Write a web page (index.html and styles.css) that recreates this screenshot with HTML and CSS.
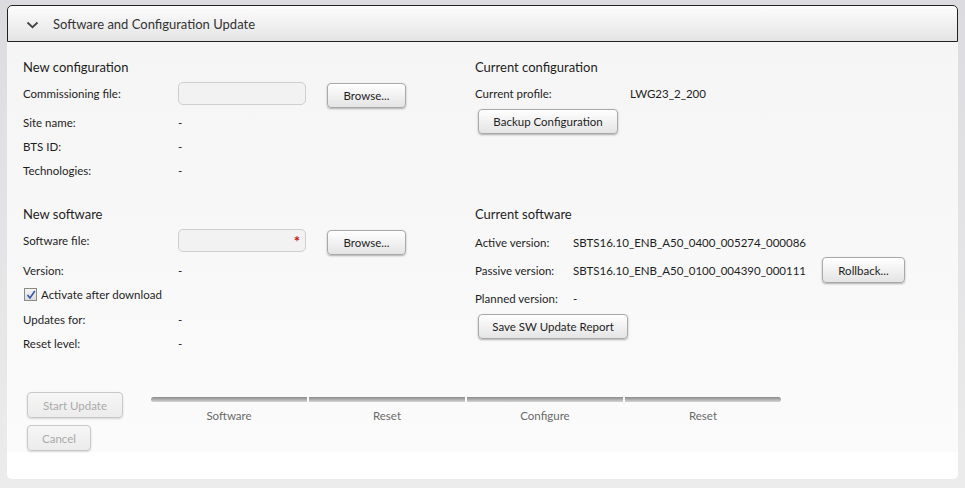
FILE: index.html
```html
<!DOCTYPE html>
<html>
<head>
<meta charset="utf-8">
<link rel="stylesheet" href="styles.css">
</head>
<body>
<div class="panel">
  <div class="panel-header">
    <svg class="chevron" width="13" height="8" viewBox="0 0 13 8"><path d="M1.5 1.5 L6.5 6.2 L11.5 1.5" fill="none" stroke="#444" stroke-width="1.8"/></svg>
    <span class="panel-title">Software and Configuration Update</span>
  </div>
  <div class="panel-body">
    <div class="content">
      <div class="columns">
        <div class="col col-left">
          <div class="section section-cfg">
            <h2 class="section-title">New configuration</h2>
            <div class="row file-row">
              <span class="label">Commissioning file:</span>
              <span class="file-input"></span>
              <button class="btn browse">Browse...</button>
            </div>
            <div class="row"><span class="label">Site name:</span><span class="value">-</span></div>
            <div class="row"><span class="label">BTS ID:</span><span class="value">-</span></div>
            <div class="row"><span class="label">Technologies:</span><span class="value">-</span></div>
          </div>
          <div class="section section-sw">
            <h2 class="section-title">New software</h2>
            <div class="row file-row">
              <span class="label">Software file:</span>
              <span class="file-input"><span class="required">*</span></span>
              <button class="btn browse">Browse...</button>
            </div>
            <div class="row"><span class="label">Version:</span><span class="value">-</span></div>
            <div class="row check-row">
              <span class="checkbox"><svg width="10" height="10" viewBox="0 0 10 10"><path d="M1.5 5 L4 8 L8.8 1" fill="none" stroke="#3a55a8" stroke-width="1.6"/></svg></span>
              <span class="check-label">Activate after download</span>
            </div>
            <div class="row"><span class="label">Updates for:</span><span class="value">-</span></div>
            <div class="row"><span class="label">Reset level:</span><span class="value">-</span></div>
          </div>
        </div>
        <div class="col col-right">
          <div class="section section-cfg">
            <h2 class="section-title">Current configuration</h2>
            <div class="row file-row">
              <span class="label">Current profile:</span>
              <span class="value">LWG23_2_200</span>
            </div>
            <button class="btn backup">Backup Configuration</button>
          </div>
          <div class="section section-sw">
            <h2 class="section-title">Current software</h2>
            <div class="row sw-row"><span class="label label-sw">Active version:</span><span class="value">SBTS16.10_ENB_A50_0400_005274_000086</span></div>
            <div class="row sw-row"><span class="label label-sw">Passive version:</span><span class="value value-passive">SBTS16.10_ENB_A50_0100_004390_000111</span><button class="btn rollback">Rollback...</button></div>
            <div class="row sw-row"><span class="label label-sw">Planned version:</span><span class="value">-</span></div>
            <button class="btn report">Save SW Update Report</button>
          </div>
        </div>
      </div>
      <div class="actions">
        <div class="action-buttons">
          <button class="btn disabled start">Start Update</button>
          <button class="btn disabled cancel">Cancel</button>
        </div>
        <div class="progress">
          <div class="step"><div class="bar first"></div><div class="step-label">Software</div></div>
          <div class="step"><div class="bar"></div><div class="step-label">Reset</div></div>
          <div class="step"><div class="bar"></div><div class="step-label">Configure</div></div>
          <div class="step"><div class="bar last"></div><div class="step-label">Reset</div></div>
        </div>
      </div>
    </div>
  </div>
</div>
</body>
</html>
```
FILE: styles.css
```css
* { box-sizing: border-box; }
html, body { height: 100%; }
body {
  margin: 0;
  background: linear-gradient(#dcdce0, #ececec);
  font-family: Lato, "Noto Sans", sans-serif;
  font-size: 11.5px;
  color: #1e1e1e;
  padding: 5px 7px 8px 7px;
}
.panel {
  width: 951px;
  border-radius: 5px;
  background: #fff;
}
.panel-header {
  height: 37px;
  border: 1px solid #222;
  border-radius: 5px 5px 0 0;
  background: linear-gradient(#fdfdfd, #e4e4e4);
  display: flex;
  align-items: center;
  padding-left: 18px;
}
.chevron { margin-top: 2px; }
.panel-title {
  margin-left: 14px;
  font-size: 13px;
  color: #333;
}
.panel-body {
  border-radius: 0 0 5px 5px;
  padding-bottom: 27px;
  background: #fff;
}
.content {
  background: linear-gradient(#f5f5f5, #fbfbfb);
  padding: 15px 0 1px 16px;
}
.columns { display: flex; }
.col-left { width: 452px; }
.col-right { flex: 1; }
.section-cfg { height: 147px; }
.section-title {
  margin: 0 0 5px 0;
  font-size: 13px;
  font-weight: normal;
  line-height: 20px;
  color: #1e1e1e;
}
.row {
  display: flex;
  align-items: center;
  height: 24px;
}
.file-row {
  align-items: flex-start;
  height: 28px;
}
.section-sw .file-row { height: 29px; }
.file-row .label, .file-row .value { line-height: 23px; }
.label { width: 155px; flex: none; }
.label-sw { width: 98px; }
.value { flex: none; white-space: nowrap; }
.file-input {
  position: relative;
  width: 128px;
  height: 23px;
  border: 1px solid #cfcfcf;
  border-radius: 5px;
  background: #f2f2f2;
}
.required {
  position: absolute;
  right: 5px;
  top: 2px;
  color: #c4141b;
  font-size: 15px;
  font-weight: bold;
}
.btn {
  font-family: inherit;
  font-size: 11.5px;
  color: #1e1e1e;
  height: 25px;
  padding: 0 4px;
  white-space: nowrap;
  border: 1px solid #a9a9a9;
  border-radius: 4px;
  background: linear-gradient(#ffffff, #e4e4e4);
  box-shadow: 0 1px 2px rgba(0,0,0,0.3);
}
.browse {
  width: 79px;
  margin: 1px 0 0 21px;
}
.backup {
  margin: -1px 0 0 3px;
  width: 140px;
}
.sw-row { height: 28px; }
.section-sw .section-title + .sw-row { margin-top: -1px; }
.value-passive { width: 249px; }
.rollback {
  width: 83px;
  height: 26px;
}
.report {
  margin: 2px 0 0 3px;
  width: 150px;
}
.check-row { padding-left: 1px; height: 25px; }
.checkbox {
  width: 13px;
  height: 13px;
  border: 1px solid #8a8a8a;
  background: linear-gradient(#f4f4f4, #dcdcdc);
  display: flex;
  align-items: center;
  justify-content: center;
  margin-right: 4px;
}
.actions {
  display: flex;
  margin-top: 37px;
  padding-left: 4px;
}
.action-buttons {
  display: flex;
  flex-direction: column;
  align-items: flex-start;
  gap: 7px;
  width: 124px;
}
.disabled {
  color: #aaa;
  border-color: #c8c8c8;
  background: linear-gradient(#f6f6f6, #ececec);
  box-shadow: 0 1px 2px rgba(0,0,0,0.15);
  height: 26px;
}
.start { width: 96px; }
.cancel { width: 64px; }
.progress {
  display: flex;
  gap: 2px;
  padding-top: 5px;
}
.step { width: 156px; }
.bar {
  height: 5px;
  background: linear-gradient(#8a8a8a, #d4d4d4);
}
.bar.first { border-radius: 3px 0 0 3px; }
.bar.last { border-radius: 0 3px 3px 0; }
.step-label {
  text-align: center;
  color: #6a6a6a;
  margin-top: 5px;
  line-height: 18px;
}
```
